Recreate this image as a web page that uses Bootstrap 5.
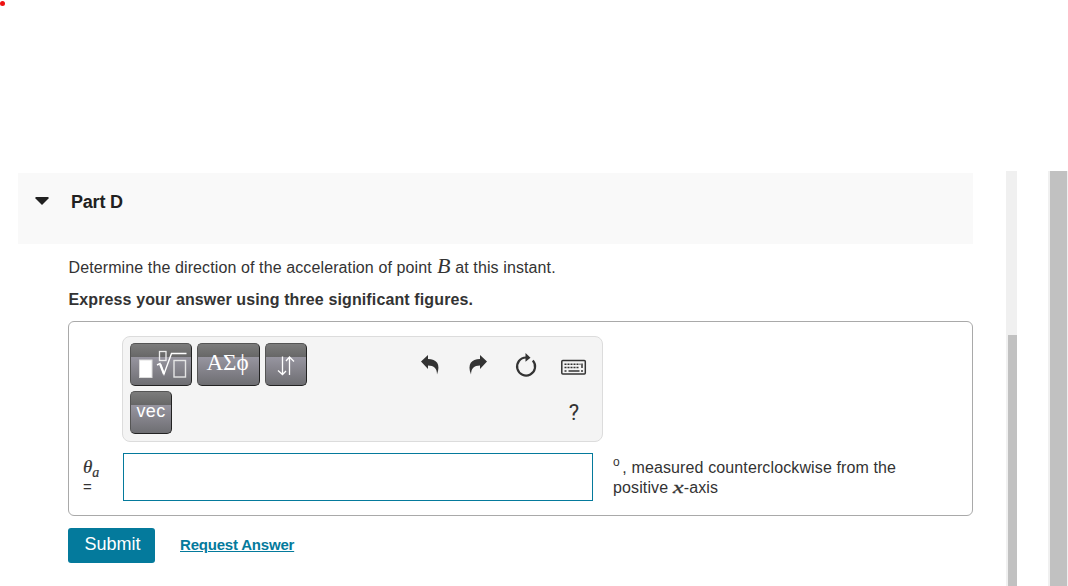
<!DOCTYPE html>
<html lang="en">
<head>
  <meta charset="UTF-8" />
  <meta name="viewport" content="width=device-width, initial-scale=1.0"/>
  <title>Part D</title>
  <link href="https://cdn.jsdelivr.net/npm/bootstrap@5.3.0/dist/css/bootstrap.min.css" rel="stylesheet" />
  <style>
      body { background: #fff; color: #333; font: 16px/20px "Liberation Sans", Arial, sans-serif; height: 586px; overflow: hidden; }
      .rec-dot { position: absolute; left: 0; top: 1px; width: 5px; height: 5px; border-radius: 50%; background: #ee1111; }
      .page-wrap { padding: 171px 0 0 18px; height: 586px; }
      .part-pane { width: 955px; padding-top: 2px; }
      .part-header { height: 71px; background: #f9f9f9; padding: 18px 0 0 17px; color: #212121; }
      .part-title { font-size: 18px; font-weight: 700; line-height: 22px; margin-left: 22px; letter-spacing: -.2px; }
      .part-content { margin-left: 50px; }
      .math { font-family: "Liberation Serif", serif; font-style: italic; }
      .math-b { display: inline-block; font-size: 20px; line-height: 16px; padding-right: 1px; margin-left: 1px; transform: scaleX(1.1); transform-origin: left; }
      .math-x { display: inline-block; font-size: 17px; line-height: 16px; width: 11px; transform: scaleX(1.4); transform-origin: left; -webkit-text-stroke: .3px #333; }
      .prompt { margin-top: 14px; padding-left: .5px; letter-spacing: .11px; }
      .instr { margin-top: 12px; padding-left: .5px; letter-spacing: .12px; }
      .answer-box { margin-top: 11px; height: 195px; border: 1px solid #a9a9a9; border-radius: 6px; padding: 14px 0 0 53px; }
      .math-toolbar { width: 481px; height: 106px; border: 1px solid #dcdcdc; border-radius: 8px; background: #f4f4f4; padding: 6px 15px 0 7px; }
      .key { display: block; height: 43px; border: 1px solid #555; border-right-color: #222; border-bottom-color: #222; border-radius: 5px; padding: 0; color: #fff; background: linear-gradient(#7c7c7c 0, #676767 13px, #9795a0 13px, #6e6e72 100%); }
      .key-root { width: 62px; }
      .key-greek { width: 63px; font: 23px/36px "Liberation Serif", serif; padding: 0 2px 3px 0; }
      .key-arrows, .key-vec { width: 42px; }
      .key-vec { font-size: 18px; line-height: 37px; letter-spacing: .4px; padding-bottom: 3px; margin-top: 5px; }
      .key svg { display: block; }
      .key-gap { gap: 5px; }
      .tool-row { gap: 22px; padding-top: 10px; }
      .tool-icon { width: 26px; height: 26px; }
      .help-mark { width: 26px; font: 22px/24px Roboto, sans-serif; text-align: center; margin-top: 22px; }
      .answer-row { margin-top: 11px; margin-left: -39px; }
      .answer-label { width: 40px; padding-top: 4px; }
      .theta { font-size: 19px; white-space: nowrap; -webkit-text-stroke: .2px #333; }
      .theta sub { font-size: 14px; bottom: -4px; }
      .equals-sign { font-size: 15px; }
      .answer-input { width: 470px; height: 48px; border: 1px solid #047a9c; border-radius: 0; }
      .answer-unit { margin-left: 20px; padding-top: 5px; width: 300px; letter-spacing: .12px; }
      .degree { font-size: 12px; line-height: 0; position: relative; top: -7px; margin-right: -2px; }
      .btn-submit { width: 87px; height: 35px; background: #047a9c; color: #fff; border: 0; border-radius: 3px; font-size: 18px; line-height: 33px; padding: 0 0 2px 2px; }
      .request-link { color: #047a9c; font-size: 15px; line-height: 18px; font-weight: 700; margin-left: 25px; letter-spacing: -.2px; padding-bottom: 1px; }
      .scroll-inner { width: 11px; margin-left: 33px; background: #f0f0f0; padding: 164px 0 0 2px; }
      .scroll-outer { width: 20px; margin-left: 31px; background: #f0f0f0; padding: 0 1px 0 2px; }
      .scroll-thumb { height: 100%; background: #c1c1c1; }
  </style>
</head>
<body>
  <div class="rec-dot"></div>
  <div class="page-wrap d-flex">
      <main class="part-pane flex-shrink-0">
          <div class="part-header d-flex align-items-start">
              <svg width="14" height="22" viewBox="0 0 14 22"><path d="M.5 6h13v1.5L7 14 .5 7.5z" fill="#212121"/></svg>
              <span class="part-title">Part D</span>
          </div>
          <div class="part-content">
              <p class="prompt mb-0">Determine the direction of the acceleration of point <span class="math math-b">B</span> at this instant.</p>
              <p class="instr fw-bold mb-0">Express your answer using three significant figures.</p>
              <div class="answer-box">
                  <div class="math-toolbar d-flex justify-content-between">
                      <!-- Template keys -->
                      <div>
                          <div class="d-flex key-gap">
                              <button class="key key-root" type="button" aria-label="Templates">
                                  <svg width="60" height="41" viewBox="0 0 60 41" fill="none" stroke="#fff">
                                      <rect x="8.5" y="16" width="12.5" height="17.5" fill="#fff" stroke="#ddd"/>
                                      <rect x="28.5" y="7.5" width="6.5" height="9" stroke="#eee" stroke-width="1.3"/>
                                      <path d="M26 21l3-1.5 4 10.5 7.5-20.5h15" stroke-width="1.4"/>
                                      <path d="M29.3 20.5l3.7 9.5" stroke-width="2.2"/>
                                      <rect x="43" y="16.5" width="11.5" height="16.5" stroke="#e5e5e5" stroke-width="1.4"/>
                                  </svg>
                              </button>
                              <button class="key key-greek" type="button">ΑΣϕ</button>
                              <button class="key key-arrows" type="button" aria-label="Sub and superscript">
                                  <svg width="40" height="41" viewBox="0 0 40 41" fill="none" stroke="#fff" stroke-width="1.3">
                                      <path d="M16.5 12.5v18M12 26.5l4.5 4 3.5-3.5M23.500 31V13M20 17l3.5-4 4.5 4.5"/>
                                  </svg>
                              </button>
                          </div>
                          <button class="key key-vec" type="button">vec</button>
                      </div>
                      <!-- Undo, redo, reset, keyboard, help -->
                      <div class="d-flex flex-column align-items-end">
                          <div class="d-flex tool-row">
                              <svg class="tool-icon" viewBox="0 0 26 26"><path d="M4 8.5l7-6.500v4c8.500 0 13 5 9 15.500 0-6-3-9-9-9V16z" fill="#333"/></svg>
                              <svg class="tool-icon" viewBox="0 0 26 26"><path d="M22 8.5l-7-6.500v4c-8.500 0-13 5-9 15.500 0-6 3-9 9-9V16z" fill="#333"/></svg>
                              <svg class="tool-icon" viewBox="0 0 26 26"><path d="M13 4.500a9 9 0 1 0 6.800 3" fill="none" stroke="#333" stroke-width="2.2"/><path d="M12.500 0l5 4.800-5 4z" fill="#333"/></svg>
                              <svg class="tool-icon" viewBox="0 0 26 26"><rect x=".8" y="7.5" width="23.5" height="13.5" rx="1" fill="none" stroke="#333" stroke-width="1.5"/><path d="M3.500 11.200h16M3.500 14.500h15" stroke="#333" stroke-width="1.5" stroke-dasharray="2 1"/><path d="M3.500 18h2M7.500 18h11M20 18h2M21 10.500v4.500" stroke="#333" stroke-width="1.5"/></svg>
                          </div>
                          <div class="help-mark">?</div>
                      </div>
                  </div>
                  <div class="answer-row d-flex">
                      <div class="answer-label"><div class="math theta">θ<sub>a</sub></div><div class="equals-sign">=</div></div>
                      <input class="answer-input" type="text" aria-label="Answer" />
                      <div class="answer-unit"><span class="degree">o</span> , measured counterclockwise from the<br>positive <span class="math math-x">x</span>-axis</div>
                  </div>
              </div>
              <div class="d-flex align-items-center mt-2 pt-1">
                  <button class="btn-submit" type="button">Submit</button>
                  <a class="request-link" href="#">Request Answer</a>
              </div>
          </div>
      </main>
      <div class="scroll-inner flex-shrink-0"><div class="scroll-thumb"></div></div>
      <div class="scroll-outer flex-shrink-0"><div class="scroll-thumb"></div></div>
  </div>

  <script src="https://cdn.jsdelivr.net/npm/bootstrap@5.3.0/dist/js/bootstrap.bundle.min.js"></script>
</body>
</html>
